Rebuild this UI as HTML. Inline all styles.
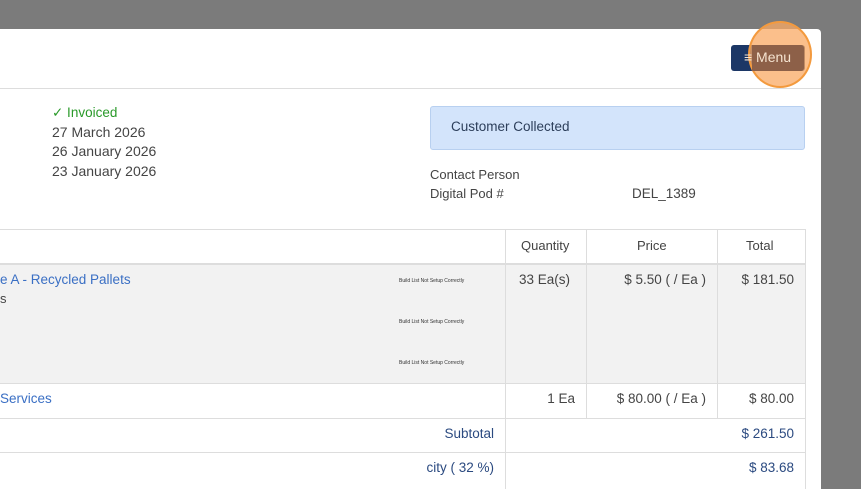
<html><head><style>
body{margin:0;width:861px;height:480px;background:#7b7b7b;font-family:"Liberation Sans",sans-serif;position:relative;overflow:hidden;color:#444}
.m{position:absolute;left:0;top:29px;width:821px;height:460px;background:#fff;border-radius:0 4px 0 0}
.a{position:absolute;white-space:nowrap;font-size:14px}
.r{position:absolute;white-space:nowrap;font-size:13.5px;text-align:right}
.hr{position:absolute;left:0;height:1px;background:#ddd}
.vl{position:absolute;width:1px;background:#ddd}
.bl{color:#3a6fc4}.nv{color:#2b4a80}
.tiny{position:absolute;font-size:5px;left:399px;color:#333}
</style></head><body>
<div class="m">
<div style="position:absolute;left:731px;top:16px;width:74px;height:26px;background:#1c3766;border-radius:3px"></div>
<div style="position:absolute;left:748px;top:-8px;width:60px;height:63px;border-radius:50%;background:rgba(250,170,100,.75);border:2px solid #f39a3e"></div>
<div style="position:absolute;left:752px;top:16px;width:52px;height:26px;background:#8d6048;border-radius:0 3px 3px 0"></div>
<div class="a" style="left:744px;top:20px;color:#f5e3d0;font-size:14px">≡ Menu</div>
<div class="hr" style="top:59px;width:821px"></div>
<div class="a" style="left:52px;top:76px;color:#2a9a2a;font-size:13.5px">✓ Invoiced</div>
<div class="a" style="left:52px;top:95px">27 March 2026</div>
<div class="a" style="left:52px;top:114px">26 January 2026</div>
<div class="a" style="left:52px;top:134px">23 January 2026</div>
<div style="position:absolute;left:430px;top:77px;width:373px;height:42px;background:#d3e4fb;border:1px solid #b8d0f0;border-radius:3px"></div>
<div class="a" style="left:451px;top:90px;color:#2c3e5a;font-size:13.5px">Customer Collected</div>
<div class="a" style="left:430px;top:138px;font-size:13px">Contact Person</div>
<div class="a" style="left:430px;top:157px;font-size:13px">Digital Pod #</div>
<div class="a" style="left:632px;top:157px;font-size:13.5px">DEL_1389</div>
<div class="hr" style="top:200px;width:805px"></div>
<div style="position:absolute;left:0;top:235px;width:805px;height:119px;background:#f2f2f2"></div>
<div class="hr" style="top:234px;width:805px;height:2px"></div>
<div class="hr" style="top:354px;width:805px"></div>
<div class="hr" style="top:389px;width:805px"></div>
<div class="hr" style="top:423px;width:805px"></div>
<div class="vl" style="left:505px;top:200px;height:260px"></div>
<div class="vl" style="left:586px;top:200px;height:189px"></div>
<div class="vl" style="left:717px;top:200px;height:189px"></div>
<div class="vl" style="left:805px;top:200px;height:260px"></div>
<div class="a" style="left:521px;top:209px;font-size:13px">Quantity</div>
<div class="a" style="left:637px;top:209px;font-size:13px">Price</div>
<div class="a" style="left:746px;top:209px;font-size:13px">Total</div>
<div class="a bl" style="left:0;top:243px;font-size:13.5px">e A - Recycled Pallets</div>
<div class="a" style="left:0;top:262px;font-size:13px">s</div>
<div class="tiny" style="top:249px">Build List Not Setup Correctly</div>
<div class="tiny" style="top:290px">Build List Not Setup Correctly</div>
<div class="tiny" style="top:331px">Build List Not Setup Correctly</div>
<div class="r" style="right:251px;top:243px">33 Ea(s)</div>
<div class="r" style="right:115px;top:243px">$ 5.50 ( / Ea )</div>
<div class="r" style="right:27px;top:243px">$ 181.50</div>
<div class="a bl" style="left:0;top:362px;font-size:13.5px">Services</div>
<div class="r" style="right:246px;top:362px">1 Ea</div>
<div class="r" style="right:115px;top:362px">$ 80.00 ( / Ea )</div>
<div class="r" style="right:27px;top:362px">$ 80.00</div>
<div class="r nv" style="right:327px;top:397px">Subtotal</div>
<div class="r nv" style="right:27px;top:397px">$ 261.50</div>
<div class="r nv" style="right:327px;top:431px">city ( 32 %)</div>
<div class="r nv" style="right:27px;top:431px">$ 83.68</div>
</div>
</body></html>
